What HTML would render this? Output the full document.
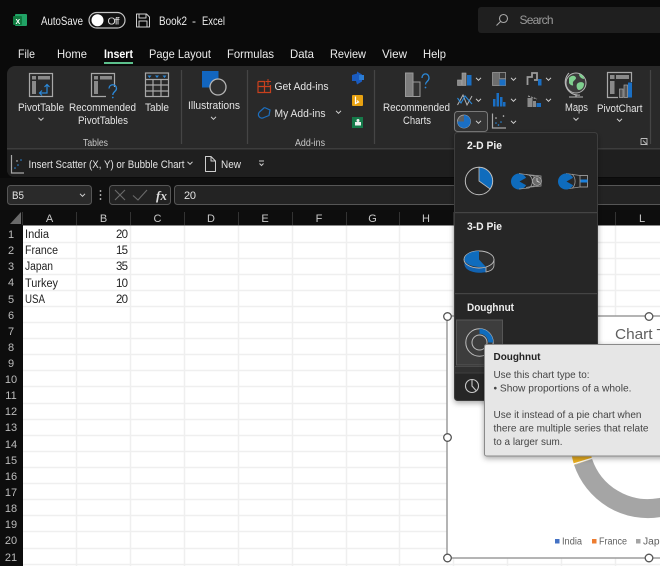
<!DOCTYPE html>
<html><head><meta charset="utf-8"><style>
html,body{margin:0;padding:0;background:#0a0a0a;width:660px;height:566px;overflow:hidden}
svg{display:block;font-family:"Liberation Sans",sans-serif;filter:blur(.35px)}
.t{fill:#e4e4e4;font-size:11px}
.m{fill:#ececec;font-size:12px}
.l{fill:#c8c8c8;font-size:10.5px}
.c{fill:#222;font-size:11.5px}
.h{fill:#c8c8c8;font-size:11px;text-anchor:middle}
.r{fill:#bdbdbd;font-size:11px;text-anchor:middle}
.b{fill:#f0f0f0;font-size:11px;font-weight:bold}
.k{fill:#444;font-size:10.5px}
.s{fill:none;stroke:#a8a8a8;stroke-width:1.2}
.f{fill:#8a8a8a}
.u{fill:#1a6fc4}
.v{fill:none;stroke:#cfcfcf;stroke-width:1;stroke-linecap:round;stroke-linejoin:round}
</style></head><body>
<svg width="660" height="566" viewBox="0 0 660 566" xmlns="http://www.w3.org/2000/svg">
<defs>
<filter id="sh" x="-20%" y="-20%" width="140%" height="140%"><feDropShadow dx="0" dy="2" stdDeviation="3" flood-color="#000" flood-opacity=".35"/></filter>
<path id="cv" d="M-2.5 -1.2L0 1.3L2.5 -1.2" fill="none" stroke="#d5d5d5" stroke-width="1"/>
</defs>
<rect width="660" height="566" fill="#0a0a0a"/>

<!-- title bar -->
<rect x="15" y="14" width="12" height="12" rx="1" fill="#21a366"/>
<rect x="13" y="16" width="9" height="9" rx="1" fill="#107c41"/>
<text x="15.5" y="24" fill="#fff" font-size="7" font-weight="bold">X</text>
<text x="41" y="25" class="m" textLength="42" lengthAdjust="spacingAndGlyphs">AutoSave</text>
<rect x="89" y="12.500" width="36" height="15.500" rx="7.700" fill="#111" stroke="#c4c4c4" stroke-width="1.200"/>
<circle cx="97.500" cy="20.300" r="6" fill="#fff"/>
<text x="107.500" y="24.500" fill="#ddd" font-size="10.500" textLength="12">Off</text>
<path d="M136.500 14h10l3 3v10h-13z" class="v"/><path d="M139 14v4h7v-4M139 27v-6h8v6" class="v"/>
<text x="159" y="25" class="m" textLength="28" lengthAdjust="spacingAndGlyphs">Book2</text>
<text x="192" y="25" class="m">-</text>
<text x="202" y="25" class="m" textLength="23" lengthAdjust="spacingAndGlyphs">Excel</text>
<rect x="478" y="7" width="190" height="26" rx="3" fill="#1f1f1f"/>
<circle cx="503.500" cy="18.500" r="4" fill="none" stroke="#a8a8a8" stroke-width="1.100"/><path d="M500.500 21.500L496.500 25.500" stroke="#a8a8a8" stroke-width="1.100"/>
<text x="519.500" y="24" fill="#9a9a9a" font-size="12" textLength="34">Search</text>

<!-- menu -->
<g class="m">
<text x="18" y="58" textLength="17" lengthAdjust="spacingAndGlyphs">File</text>
<text x="57" y="58" textLength="30" lengthAdjust="spacingAndGlyphs">Home</text>
<text x="104" y="58" textLength="29" lengthAdjust="spacingAndGlyphs" font-weight="bold" fill="#fff">Insert</text>
<text x="149" y="58" textLength="62" lengthAdjust="spacingAndGlyphs">Page Layout</text>
<text x="227" y="58" textLength="47" lengthAdjust="spacingAndGlyphs">Formulas</text>
<text x="290" y="58" textLength="24" lengthAdjust="spacingAndGlyphs">Data</text>
<text x="330" y="58" textLength="36" lengthAdjust="spacingAndGlyphs">Review</text>
<text x="382" y="58" textLength="25" lengthAdjust="spacingAndGlyphs">View</text>
<text x="423" y="58" textLength="23" lengthAdjust="spacingAndGlyphs">Help</text>
</g>
<rect x="104" y="62" width="29" height="2" fill="#5cc08c"/>

<!-- ribbon -->
<path d="M7 170V74a8 8 0 0 1 8-8H660V177H14a7 7 0 0 1-7-7z" fill="#292929"/>
<path d="M7 148H660V177H14a7 7 0 0 1-7-7z" fill="#1f1f1f"/>
<rect x="7" y="148" width="653" height="1.500" fill="#3d3d3d"/>
<g stroke="#454545" stroke-width="1.200">
<path d="M181.500 70V144M247.500 70V144M374.500 70V144M650.500 70V144"/>
</g>

<!-- pivot table -->
<rect x="29.500" y="73.500" width="23" height="23" class="s"/>
<rect x="32" y="76" width="4" height="3.500" class="f"/><rect x="38" y="76" width="12" height="3.500" class="f"/><rect x="32" y="81" width="4" height="13" class="f"/>
<path d="M40 93h7v-8M44.500 87L47 84.500L49.500 87M42 90.500L39.500 93L42 95.500" fill="none" stroke="#2b88d8" stroke-width="1.200"/>
<text x="18" y="111" class="t" textLength="46" lengthAdjust="spacingAndGlyphs">PivotTable</text>
<use href="#cv" x="41" y="119"/>
<!-- recommended pivot -->
<path d="M114.500 87V73.500H91.500V96.500H106" class="s"/>
<rect x="94" y="76" width="4" height="3.500" class="f"/><rect x="100" y="76" width="12" height="3.500" class="f"/><rect x="94" y="81" width="4" height="13" class="f"/>
<path d="M109 88.500c0-5 7.500-5 7.500 0 0 3-3.700 3-3.700 6.500" fill="none" stroke="#2b88d8" stroke-width="1.300"/><circle cx="112.800" cy="97.500" r=".9" fill="#2b88d8"/>
<text x="69" y="111" class="t" textLength="67" lengthAdjust="spacingAndGlyphs">Recommended</text>
<text x="78" y="124" class="t" textLength="50" lengthAdjust="spacingAndGlyphs">PivotTables</text>
<!-- table -->
<rect x="145.500" y="73" width="23" height="23.500" class="s"/>
<path d="M145.500 79.500H168.500M145.500 85H168.500M145.500 91H168.500M153 79.500V96.500M161 79.500V96.500" class="s" stroke-width="1"/>
<path d="M147.500 75.500h4l-2 2.500zM155 75.500h4l-2 2.500zM162.500 75.500h4l-2 2.500z" fill="#2b88d8"/>
<text x="145" y="111" class="t" textLength="24" lengthAdjust="spacingAndGlyphs">Table</text>
<text x="83" y="146" class="l" textLength="25" lengthAdjust="spacingAndGlyphs">Tables</text>
<!-- illustrations -->
<rect x="202" y="71" width="16.500" height="16.500" fill="#1266c0"/>
<circle cx="218" cy="87" r="8" fill="#2f2f2f" stroke="#b5b5b5" stroke-width="1.300"/>
<text x="188" y="109" class="t" textLength="52" lengthAdjust="spacingAndGlyphs">Illustrations</text>
<use href="#cv" x="213.500" y="118"/>
<!-- add-ins -->
<path d="M258 81.500H265M258 81.500V92.500H270.500V85M258 86.500H270.500M264.500 81.500V92.500" fill="none" stroke="#c8401d" stroke-width="1.200"/>
<path d="M268 79V85M265.500 81.500H271" stroke="#c8401d" stroke-width="1"/>
<text x="274.500" y="90" class="t" textLength="54" lengthAdjust="spacingAndGlyphs">Get Add-ins</text>
<path d="M264.500 107.500L270 110L269 115.500L264 117.500M264 117.500A3.500 3.500 0 1 1 260 111.500L264.500 107.500" fill="none" stroke="#1c6fc0" stroke-width="1.200"/>
<text x="274.500" y="117" class="t" textLength="51" lengthAdjust="spacingAndGlyphs">My Add-ins</text>
<use href="#cv" x="338.500" y="112"/>
<text x="295" y="146" class="l" textLength="30" lengthAdjust="spacingAndGlyphs">Add-ins</text>
<path d="M352 75l5-1.500v-2l5 3v7l-5 3-1-3.500h-4z" fill="#1a5bbf"/><rect x="359" y="75" width="5" height="5" fill="#2b7cd3"/>
<rect x="352" y="95" width="11" height="11" rx="1" fill="#e8a211"/><path d="M355.500 96.500v7l3-1.500-1.500-1.500" fill="none" stroke="#fff" stroke-width="1.200"/>
<rect x="352" y="117" width="11" height="11" fill="#167a4a"/><rect x="355" y="122" width="6" height="3.500" fill="#eee"/><circle cx="358" cy="120.500" r="1.500" fill="#eee"/>
<!-- recommended charts -->
<rect x="405.500" y="73" width="7.500" height="23.500" fill="#7d7d7d" stroke="#999"/>
<rect x="413" y="82" width="7" height="14.500" fill="#333" stroke="#999"/>
<path d="M422 78c0-5.500 7-5.500 7 0 0 3.500-3.500 3.500-3.500 6.500" fill="none" stroke="#2b88d8" stroke-width="1.300"/><circle cx="425.500" cy="87.500" r=".9" fill="#2b88d8"/>
<text x="383" y="111" class="t" textLength="67" lengthAdjust="spacingAndGlyphs">Recommended</text>
<text x="403" y="124" class="t" textLength="28" lengthAdjust="spacingAndGlyphs">Charts</text>
<!-- chart grid -->
<rect x="457.500" y="80" width="4" height="5.500" class="f" stroke="#aaa" stroke-width=".6"/><rect x="462" y="73" width="4" height="12.500" class="f" stroke="#aaa" stroke-width=".6"/><rect x="467" y="75" width="4.500" height="10.500" class="u"/>
<use href="#cv" x="478.500" y="79"/>
<rect x="492.500" y="72.500" width="13" height="13" fill="#6e6e6e" stroke="#999" stroke-width=".8"/><rect x="499.500" y="79.500" width="6" height="6" class="u"/><rect x="499.500" y="72.500" width="6" height="6" fill="#3a3a3a" stroke="#999" stroke-width=".6"/>
<use href="#cv" x="513.500" y="79"/>
<path d="M527.500 85V77H532V73H537V80H534" fill="none" stroke="#9a9a9a" stroke-width="1.800"/><rect x="538" y="79" width="3.500" height="6.500" class="u"/>
<use href="#cv" x="548.500" y="79"/>
<path d="M457.500 105L463 95L467 105L472 96" fill="none" stroke="#b5b5b5" stroke-width="1"/><path d="M457.500 98L461 103L465 96L472 104" fill="none" stroke="#2b88d8" stroke-width="1.100"/>
<use href="#cv" x="478.500" y="100"/>
<path d="M493 106.500V99H495.500V106.500zM496.500 106.500V93H499V106.500zM500 106.500V97H502.500V106.500zM503 106.500V102H505.500V106.500z" class="u"/>
<use href="#cv" x="513.500" y="100"/>
<rect x="527.500" y="98" width="5" height="9" class="f"/><rect x="533" y="101" width="3" height="6" class="f"/><rect x="536.500" y="103" width="4.500" height="4" class="u"/>
<path d="M528 96L537 99" stroke="#aaa" stroke-width="1" stroke-dasharray="2 1"/>
<use href="#cv" x="548.500" y="100"/>
<rect x="454.500" y="111.500" width="33" height="20" rx="3" fill="#343434" stroke="#7a7a7a"/>
<circle cx="464" cy="121.500" r="6.500" fill="#606060" stroke="#aaa" stroke-width=".8"/>
<path d="M464 121.500V115a6.500 6.500 0 1 1-6.500 6.500z" class="u"/>
<use href="#cv" x="478.500" y="122"/>
<path d="M492.500 113.500V128H506" class="s"/><g fill="#2b88d8"><circle cx="496" cy="123" r=".8"/><circle cx="498.500" cy="125" r=".8"/><circle cx="501" cy="122" r=".8"/></g><g fill="#ccc"><circle cx="496" cy="118" r=".8"/><circle cx="503.500" cy="116" r=".8"/></g>
<use href="#cv" x="513.500" y="122"/>
<!-- maps -->
<circle cx="576" cy="83" r="10" fill="#3b3b3b" stroke="#b5b5b5" stroke-width="1"/>
<path d="M569 78c3-4 7-2 7 0s-4 3-3 6-3 1-4-1zM577 84c2-3 7-2 7 0 0 4-3 6-5 6s-3-4-2-6zM579 74c2 0 5 2 5 5-2 0-5-2-5-5z" fill="#7fd08f"/>
<path d="M569 73a13 13 0 0 0 11 22M576 95V97M569 97H583" fill="none" stroke="#b5b5b5" stroke-width="1.100"/>
<text x="565" y="111" class="t" textLength="23" lengthAdjust="spacingAndGlyphs">Maps</text>
<use href="#cv" x="576" y="119"/>
<!-- pivotchart -->
<path d="M631.500 82V72.500H607.500V97.500H618" class="s"/>
<rect x="610" y="75" width="4.500" height="4" class="f"/><rect x="616" y="75" width="13" height="4" class="f"/><rect x="610" y="81" width="4.500" height="13" class="f"/>
<rect x="619.500" y="89" width="3.500" height="8.500" fill="#555" stroke="#aaa" stroke-width=".7"/><rect x="624" y="85" width="3.500" height="12.500" fill="#555" stroke="#aaa" stroke-width=".7"/><rect x="628" y="82.500" width="4" height="15" class="u"/>
<text x="597" y="112" class="t" textLength="45.500" lengthAdjust="spacingAndGlyphs">PivotChart</text>
<use href="#cv" x="619.500" y="120"/>
<path d="M641 138.500H647V144M641 138.500V144.500H647" fill="none" stroke="#bbb" stroke-width=".9"/><path d="M643 140.500L647.500 145" stroke="#bbb" stroke-width=".9"/>

<!-- qat row -->
<path d="M11.500 155V173H24" class="s"/>
<g fill="#2b88d8"><circle cx="15" cy="168" r=".8"/><circle cx="18" cy="165" r=".8"/><circle cx="21" cy="160" r=".8"/></g><circle cx="17" cy="161" r=".7" fill="#ddd"/>
<text x="28.500" y="168" class="t" textLength="156" lengthAdjust="spacingAndGlyphs">Insert Scatter (X, Y) or Bubble Chart</text>
<use href="#cv" x="190" y="163"/>
<path d="M205.500 156.500H211L215.500 161V171.500H205.500z M211 156.500V161H215.500" class="v"/>
<text x="221" y="168" class="t" textLength="20" lengthAdjust="spacingAndGlyphs">New</text>
<path d="M259 161H264M259.500 163.500L261.500 165.500L263.500 163.500" fill="none" stroke="#ccc"/>

<!-- formula bar -->
<rect x="0" y="178" width="660" height="32" fill="#0f0f0f"/>
<rect x="7.500" y="185.500" width="84" height="19" rx="3" fill="#2a2a2a" stroke="#565656"/>
<text x="12" y="199" class="t" textLength="12" lengthAdjust="spacingAndGlyphs">B5</text>
<use href="#cv" x="82.500" y="195"/>
<g fill="#ccc"><circle cx="100.500" cy="191" r=".9"/><circle cx="100.500" cy="195" r=".9"/><circle cx="100.500" cy="199" r=".9"/></g>
<rect x="109.500" y="185.500" width="61" height="19" rx="3" fill="#222" stroke="#565656"/>
<path d="M115 190L125 200M125 190L115 200" stroke="#6a6a6a" stroke-width="1.100"/>
<path d="M133 195.500L138 200L147 190" fill="none" stroke="#6a6a6a" stroke-width="1.100"/>
<text x="156" y="200" fill="#ddd" font-size="13" font-style="italic" font-family="Liberation Serif, serif" font-weight="bold" textLength="11">fx</text>
<rect x="174.500" y="185.500" width="490" height="19" rx="3" fill="#232323" stroke="#565656"/>
<text x="184" y="199" class="t" textLength="12">20</text>

<!-- sheet -->
<rect x="0" y="210" width="660" height="15.500" fill="#0d0d0d"/>
<rect x="0" y="225.500" width="22.500" height="341" fill="#0d0d0d"/>
<rect x="23" y="225.500" width="637" height="341" fill="#fff"/>
<rect x="23" y="225" width="637" height="1" fill="#8a8a8a"/>
<path d="M21 212V224H10z" fill="#6a6a6a"/>
<g stroke="#efefef" stroke-width="1.500">
<path d="M76.500 226V566M130.500 226V566M184.500 226V566M238.500 226V566M292.500 226V566M346.500 226V566M399.500 226V566M453.500 226V566M507.500 226V566M561.500 226V566M615.500 226V566"/>
<path d="M23 242.500H660M23 258.500H660M23 274.500H660M23 290.500H660M23 306.500H660M23 322.500H660M23 338.500H660M23 354.500H660M23 370.500H660M23 386.500H660M23 403.500H660M23 419.500H660M23 435.500H660M23 451.500H660M23 467.500H660M23 483.500H660M23 499.500H660M23 515.500H660M23 531.500H660M23 548.500H660M23 564.500H660"/>
</g>
<g stroke="#333" stroke-width="1"><path d="M22.500 212V225M76.500 212V225M130.500 212V225M184.500 212V225M238.500 212V225M292.500 212V225M346.500 212V225M399.500 212V225M453.500 212V225M615.500 212V225"/></g>
<g class="h"><text x="49.500" y="222">A</text><text x="103.500" y="222">B</text><text x="157.500" y="222">C</text><text x="211" y="222">D</text><text x="265" y="222">E</text><text x="319" y="222">F</text><text x="372.500" y="222">G</text><text x="426" y="222">H</text><text x="642" y="222">L</text></g>
<g class="r"><text x="11" y="238">1</text><text x="11" y="254">2</text><text x="11" y="270">3</text><text x="11" y="286">4</text><text x="11" y="303">5</text><text x="11" y="319">6</text><text x="11" y="335">7</text><text x="11" y="351">8</text><text x="11" y="367">9</text><text x="11" y="383">10</text><text x="11" y="399">11</text><text x="11" y="415">12</text><text x="11" y="431">13</text><text x="11" y="448">14</text><text x="11" y="464">15</text><text x="11" y="480">16</text><text x="11" y="496">17</text><text x="11" y="512">18</text><text x="11" y="528">19</text><text x="11" y="544">20</text><text x="11" y="561">21</text></g>
<g class="c">
<text x="25" y="238" textLength="24" lengthAdjust="spacingAndGlyphs">India</text><text x="25" y="254" textLength="33" lengthAdjust="spacingAndGlyphs">France</text><text x="25" y="270" textLength="28" lengthAdjust="spacingAndGlyphs">Japan</text><text x="25" y="287" textLength="33" lengthAdjust="spacingAndGlyphs">Turkey</text><text x="25" y="303" textLength="20" lengthAdjust="spacingAndGlyphs">USA</text>
<text x="116" y="238" textLength="12">20</text><text x="116" y="254" textLength="12">15</text><text x="116" y="270" textLength="12">35</text><text x="116" y="287" textLength="12">10</text><text x="116" y="303" textLength="12">20</text>
</g>

<!-- chart -->
<rect x="447" y="316" width="230" height="242" fill="#fff" stroke="#9c9c9c" stroke-width="1.500"/>
<text x="615" y="339" fill="#5f5f5f" font-size="15" textLength="70" lengthAdjust="spacingAndGlyphs">Chart Title</text>
<path d="M583.100 462A68.500 68.500 0 0 1 580 440" fill="none" stroke="#edb120" stroke-width="19"/>
<path d="M583.100 462A68.500 68.500 0 0 0 716.500 440" fill="none" stroke="#a5a5a5" stroke-width="19"/>
<path d="M572 464.500L593 458" stroke="#fff" stroke-width="1.200"/>
<rect x="555" y="539" width="4.500" height="4.500" fill="#4472c4"/>
<text x="562" y="544.500" fill="#5f5f5f" font-size="10" textLength="20" lengthAdjust="spacingAndGlyphs">India</text>
<rect x="592" y="539" width="4.500" height="4.500" fill="#ed7d31"/>
<text x="599" y="544.500" fill="#5f5f5f" font-size="10" textLength="28" lengthAdjust="spacingAndGlyphs">France</text>
<rect x="636" y="539" width="4.500" height="4.500" fill="#a5a5a5"/>
<text x="643" y="544.500" fill="#5f5f5f" font-size="10" textLength="28" lengthAdjust="spacingAndGlyphs">Japan</text>
<g fill="#fff" stroke="#555" stroke-width="1.300">
<circle cx="447.500" cy="316.500" r="3.800"/><circle cx="447.500" cy="437.500" r="3.800"/><circle cx="447.500" cy="558" r="3.800"/><circle cx="649" cy="316.500" r="3.800"/><circle cx="649" cy="558" r="3.800"/>
</g>

<!-- dropdown -->
<rect x="454.500" y="132.500" width="143" height="268" rx="3" fill="#282828" stroke="#3e3e3e" filter="url(#sh)"/>
<text x="467" y="149" class="b" textLength="35" lengthAdjust="spacingAndGlyphs">2-D Pie</text>
<circle cx="479" cy="181" r="13.700" fill="none" stroke="#bdbdbd" stroke-width="1"/>
<path d="M479 167.300A13.700 13.700 0 0 1 490 189L479 181z" fill="#0f6cbd" stroke="#bdbdbd" stroke-width=".8"/>
<!-- pie of pie -->
<path d="M526 174.500L534 176V186L526 187.500L541 186V176z" fill="none" stroke="#9a9a9a" stroke-width=".8"/>
<circle cx="537" cy="181" r="4.500" fill="#6a6a6a" stroke="#aaa" stroke-width=".8"/><path d="M537 178V181L539.500 182.500" fill="none" stroke="#ddd" stroke-width=".8"/>
<circle cx="519" cy="181.500" r="8" fill="#0f6cbd"/><path d="M527.500 177L519.500 181.500L527.500 186z" fill="#282828"/>
<path d="M519 173.500l10 1.500a8 8 0 0 1 0 13l-10 1" fill="none" stroke="#9a9a9a" stroke-width=".8"/>
<!-- bar of pie -->
<rect x="580" y="175.500" width="7.500" height="11.500" fill="#282828" stroke="#aaa" stroke-width=".8"/>
<rect x="580.500" y="179.500" width="7" height="3" fill="#1a7fdc"/>
<path d="M566 173.500L580 175.500M566 189L580 187" stroke="#9a9a9a" stroke-width=".8"/>
<circle cx="566" cy="181.500" r="8" fill="#0f6cbd"/><path d="M574.500 177L566.500 181.500L574.500 186z" fill="#282828"/>
<path d="M572 174a10 10 0 0 1 0 14.500" fill="none" stroke="#9a9a9a" stroke-width=".8"/>
<rect x="455" y="212" width="142" height="1.200" fill="#444"/>
<text x="467" y="230" class="b" textLength="35" lengthAdjust="spacingAndGlyphs">3-D Pie</text>
<!-- 3d pie -->
<path d="M464.500 260V265C466 272 478 274 486 272V268z" fill="#1162b0"/>
<path d="M494 260V265C494 269 491 271 486 272V267z" fill="#333" stroke="#bdbdbd" stroke-width=".8"/>
<ellipse cx="479" cy="259.500" rx="15" ry="8.500" fill="#2f2f2f" stroke="#bdbdbd" stroke-width=".9"/>
<path d="M479 251C471 251 464.500 254.500 464.500 259.500C464.500 264 474 268 486 267L479 259.500z" fill="#0f6cbd"/>
<rect x="455" y="293" width="142" height="1.200" fill="#444"/>
<text x="467" y="311" class="b" textLength="47" lengthAdjust="spacingAndGlyphs">Doughnut</text>
<rect x="456.500" y="320" width="46" height="45" fill="#3d3d3d" stroke="#565656"/>
<circle cx="479.500" cy="342.500" r="13.700" fill="none" stroke="#bdbdbd" stroke-width="1"/>
<circle cx="479.500" cy="342.500" r="7.500" fill="none" stroke="#bdbdbd" stroke-width="1"/>
<path d="M479.500 331.300A11.200 11.200 0 0 1 490.700 342.500" fill="none" stroke="#0f6cbd" stroke-width="5"/>
<rect x="455" y="366" width="142" height="7" fill="#303030"/>
<rect x="455" y="366" width="142" height="1" fill="#4a4a4a"/><rect x="455" y="372.500" width="142" height="1" fill="#3e3e3e"/>
<circle cx="472" cy="386" r="6.500" fill="none" stroke="#c8c8c8" stroke-width="1.100"/><path d="M472 380V386L476 390.500" fill="none" stroke="#c8c8c8" stroke-width="1.100"/>

<!-- tooltip -->
<rect x="484.500" y="344.500" width="190" height="111.500" rx="2" fill="#e6e6e6" stroke="#8a8a8a" filter="url(#sh)"/>
<text x="493.500" y="360" fill="#222" font-size="10.500" font-weight="bold" textLength="47" lengthAdjust="spacingAndGlyphs">Doughnut</text>
<text x="493.500" y="378" class="k" textLength="96" lengthAdjust="spacingAndGlyphs">Use this chart type to:</text>
<text x="493.500" y="391.500" class="k" textLength="138" lengthAdjust="spacingAndGlyphs">• Show proportions of a whole.</text>
<text x="493.500" y="418" class="k" textLength="148" lengthAdjust="spacingAndGlyphs">Use it instead of a pie chart when</text>
<text x="493.500" y="431.500" class="k" textLength="155" lengthAdjust="spacingAndGlyphs">there are multiple series that relate</text>
<text x="493.500" y="445" class="k" textLength="69" lengthAdjust="spacingAndGlyphs">to a larger sum.</text>
</svg>
</body></html>
